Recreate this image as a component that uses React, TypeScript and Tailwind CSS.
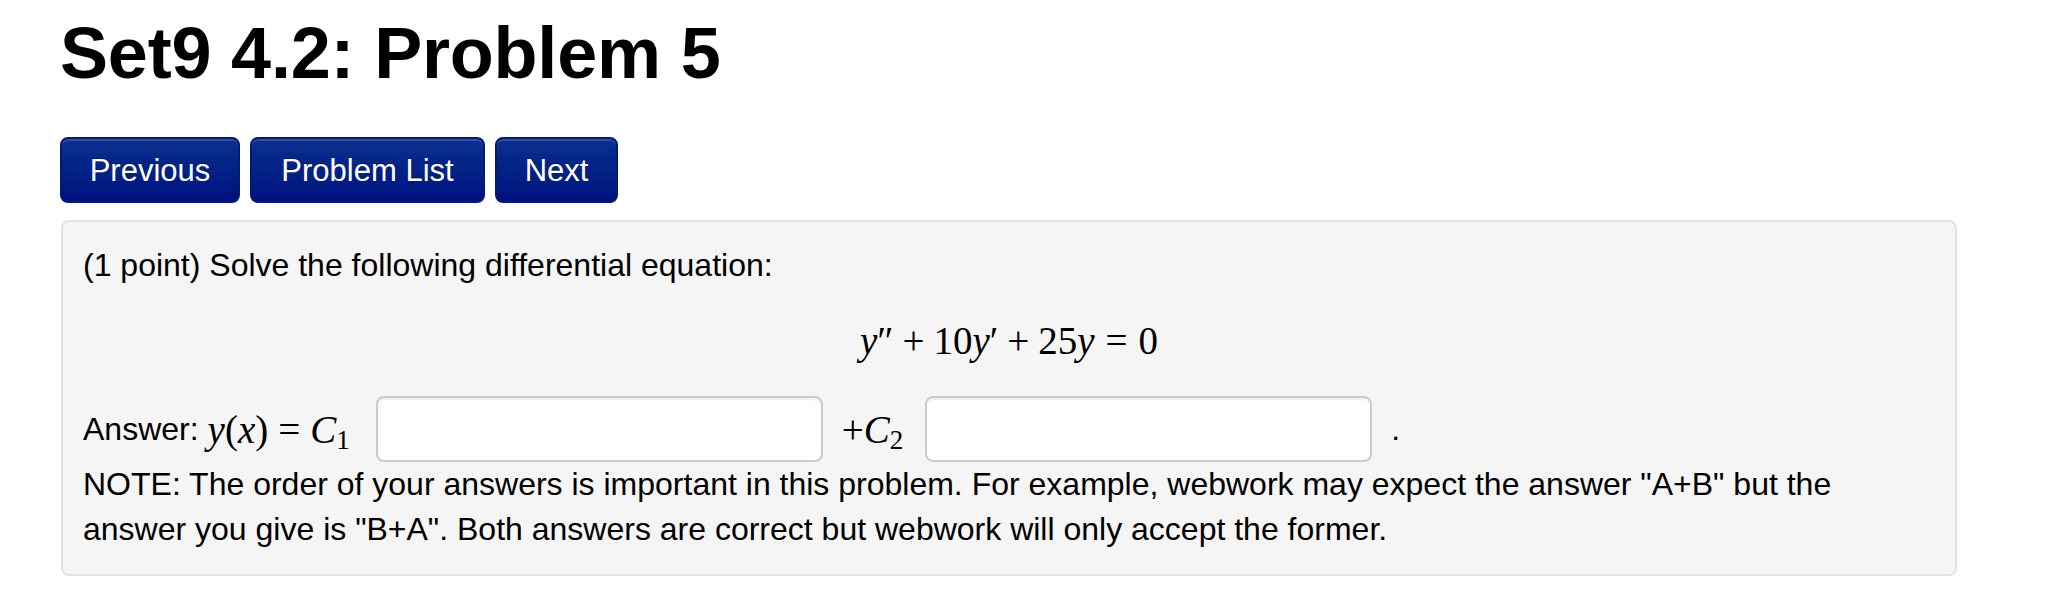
import React from "react";

const navButtons = [
  { label: "Previous", w: "w-[180px]" },
  { label: "Problem List", w: "w-[235px]" },
  { label: "Next", w: "w-[123px]" },
];

function AnswerBox() {
  return (
    <input
      type="text"
      className="h-[66px] w-[447px] shrink-0 rounded-[8px] border-2 border-[#cbcbcb] bg-white shadow-[inset_0_2px_2px_rgba(0,0,0,0.06)] outline-none"
    />
  );
}

export default function App() {
  return (
    <div className="h-[597px] w-full bg-white pl-[60px] pr-[89px] font-['Liberation_Sans',Arial,sans-serif] text-black">
      <h2 className="mt-[17px] text-[72px] font-bold leading-none tracking-[-0.2px]">
        Set9 4.2: Problem 5
      </h2>

      {/* nav */}
      <div className="mt-[48px] flex gap-[10px]">
        {navButtons.map((b) => (
          <button
            key={b.label}
            className={`${b.w} flex h-[66px] items-center justify-center rounded-[8px] border-2 border-[#061a6e] bg-linear-to-b from-[#0c2f8e] to-[#00107f] text-[31px] leading-none text-white shadow-[inset_0_2px_0_rgba(255,255,255,0.15)] [text-shadow:0_-1px_0_rgba(0,0,0,0.35)]`}
          >
            {b.label}
          </button>
        ))}
      </div>

      {/* problem well */}
      <div className="mt-[17px] ml-px rounded-[8px] border-2 border-[#e3e3e3] bg-[#f5f5f5] px-[20px] pt-[21px] pb-[22px] text-[32px] leading-[45px]">
        <p>(1 point) Solve the following differential equation:</p>

        <div className="mt-[30px] flex justify-center font-['Liberation_Serif','Times_New_Roman',serif] text-[39px] leading-[45px]">
          <span>
            <i>y</i>
            <span>″</span>
            <span className="mx-[9px]">+</span>
            10<i>y</i>
            <span>′</span>
            <span className="mx-[9px]">+</span>
            25<i>y</i>
            <span className="mx-[11px]">=</span>0
          </span>
        </div>

        <div className="mt-[33px] flex h-[66px] items-center">
          <span>Answer:</span>
          <span className="ml-[9px] font-['Liberation_Serif','Times_New_Roman',serif] text-[39px]">
            <i>y</i>(<i>x</i>)<span className="mx-[10px]">=</span>
            <i>C</i>
            <sub className="text-[27px]">1</sub>
          </span>
          <span className="ml-[26px] flex">
            <AnswerBox />
          </span>
          <span className="ml-[19px] mr-[22px] font-['Liberation_Serif','Times_New_Roman',serif] text-[39px]">
            +<i>C</i>
            <sub className="text-[27px]">2</sub>
          </span>
          <AnswerBox />
          <span className="ml-[19px]">.</span>
        </div>

        <p>
          NOTE: The order of your answers is important in this problem. For example, webwork may
          expect the answer "A+B" but the
          <br />
          answer you give is "B+A". Both answers are correct but webwork will only accept the
          former.
        </p>
      </div>
    </div>
  );
}
